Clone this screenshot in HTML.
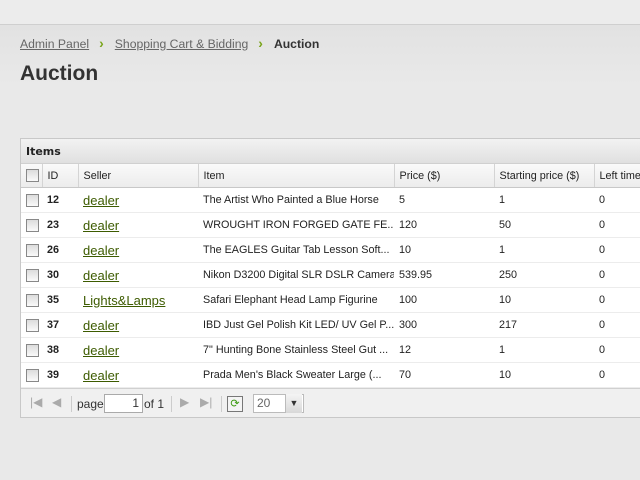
<!DOCTYPE html>
<html><head><style>
body{margin:0;width:640px;height:480px;overflow:hidden;background:#e9e9e9;font-family:"Liberation Sans",Arial,sans-serif;position:relative}
.top{position:absolute;left:0;top:0;width:640px;height:24px;background:#ececec;border-bottom:1px solid #cfcfcf}
.band{position:absolute;left:0;top:25px;width:640px;height:60px;background:linear-gradient(#e2e2e2,#e9e9e9)}
.bc{position:absolute;left:20px;top:37px;font-size:12.2px;color:#666}
.bc a{color:#666;text-decoration:underline}
.bc .s{color:#7aa51c;font-weight:bold;font-size:14px;margin:0 11px 0 10px;line-height:12px}
.bc b{color:#333}
h1{position:absolute;left:20px;top:62px;margin:0;font-size:21px;color:#333;font-weight:bold}
.panel{position:absolute;left:20px;top:138px;width:640px;height:278px;border:1px solid #c8c8c8;background:#fff;overflow:hidden}
.ph{height:25px;background:linear-gradient(#f2f2f2,#e0e0e0);border-bottom:1px solid #d0d0d0;font:bold 11px "DejaVu Sans",sans-serif;color:#222;line-height:26px;padding-left:5px;box-sizing:border-box}
table{border-collapse:collapse;font-size:10.8px;color:#222;table-layout:fixed;width:633px}
td,th{padding:0 0 0 5px;height:24px;border-bottom:1px solid #ececec;white-space:nowrap;overflow:hidden;text-align:left;font-weight:normal;text-overflow:clip}
th{background:linear-gradient(#fafafa,#ececec);border-right:1px solid #d4d4d4;border-bottom:1px solid #c8c8c8;height:23px}
td.id{font-weight:bold}
td a{color:#3d5b00;font-size:13px;text-decoration:underline}
.cb{display:inline-block;width:11px;height:11px;border:1px solid #888;background:linear-gradient(#dcdcdc,#fafafa);vertical-align:middle}
.tb{position:absolute;left:0;top:249px;width:640px;height:29px;background:#f0f0f0;border-top:1px solid #d0d0d0;font-size:12px;color:#333}
.tb span{position:absolute}
.sep{width:1px;height:16px;background:#ccc;top:7px}
</style></head><body>
<div class="top"></div><div class="band"></div>
<div class="bc"><a>Admin Panel</a><span class="s">›</span><a>Shopping Cart &amp; Bidding</a><span class="s">›</span><b>Auction</b></div>
<h1>Auction</h1>
<div class="panel">
<div class="ph">Items</div>
<table>
<colgroup><col style="width:21px"><col style="width:36px"><col style="width:120px"><col style="width:196px"><col style="width:100px"><col style="width:100px"><col style="width:60px"></colgroup>
<tr><th><span class="cb"></span></th><th>ID</th><th>Seller</th><th>Item</th><th>Price ($)</th><th>Starting price ($)</th><th>Left time</th></tr>
<tr><td><span class="cb"></span></td><td class="id">12</td><td><a>dealer</a></td><td>The Artist Who Painted a Blue Horse</td><td>5</td><td>1</td><td>0</td></tr>
<tr><td><span class="cb"></span></td><td class="id">23</td><td><a>dealer</a></td><td>WROUGHT IRON FORGED GATE FE...</td><td>120</td><td>50</td><td>0</td></tr>
<tr><td><span class="cb"></span></td><td class="id">26</td><td><a>dealer</a></td><td>The EAGLES Guitar Tab Lesson Soft...</td><td>10</td><td>1</td><td>0</td></tr>
<tr><td><span class="cb"></span></td><td class="id">30</td><td><a>dealer</a></td><td>Nikon D3200 Digital SLR DSLR Camera</td><td>539.95</td><td>250</td><td>0</td></tr>
<tr><td><span class="cb"></span></td><td class="id">35</td><td><a>Lights&amp;Lamps</a></td><td>Safari Elephant Head Lamp Figurine</td><td>100</td><td>10</td><td>0</td></tr>
<tr><td><span class="cb"></span></td><td class="id">37</td><td><a>dealer</a></td><td>IBD Just Gel Polish Kit LED/ UV Gel P...</td><td>300</td><td>217</td><td>0</td></tr>
<tr><td><span class="cb"></span></td><td class="id">38</td><td><a>dealer</a></td><td>7" Hunting Bone Stainless Steel Gut ...</td><td>12</td><td>1</td><td>0</td></tr>
<tr><td><span class="cb"></span></td><td class="id">39</td><td><a>dealer</a></td><td>Prada Men's Black Sweater Large (...</td><td>70</td><td>10</td><td>0</td></tr>
</table>
<div class="tb">
<span style="left:9px;top:6px;color:#aaa">|◀</span>
<span style="left:31px;top:6px;color:#aaa">◀</span>
<span class="sep" style="left:50px"></span>
<span style="left:56px;top:8px">page</span>
<span style="left:83px;top:5px;width:34px;height:17px;border:1px solid #aaa;background:#fff;text-align:right;padding-right:3px;line-height:17px">1</span>
<span style="left:123px;top:8px">of 1</span>
<span class="sep" style="left:150px"></span>
<span style="left:159px;top:6px;color:#aaa">▶</span>
<span style="left:179px;top:6px;color:#aaa">▶|</span>
<span class="sep" style="left:200px"></span>
<span style="left:206px;top:7px;width:14px;height:14px;border:1px solid #777;background:#f4f4f4;color:#3a9a10;font-size:11px;text-align:center;line-height:14px">⟳</span>
<span style="left:232px;top:5px;width:46px;height:17px;border:1px solid #bbb;background:#fff;color:#666;padding-left:3px;line-height:17px">20</span>
<span style="left:264px;top:5px;width:16px;height:19px;background:linear-gradient(#f4f4f4,#d8d8d8);border-left:1px solid #bbb;font-size:9px;text-align:center;line-height:19px">▼</span>
</div>
</div>
</body></html>
